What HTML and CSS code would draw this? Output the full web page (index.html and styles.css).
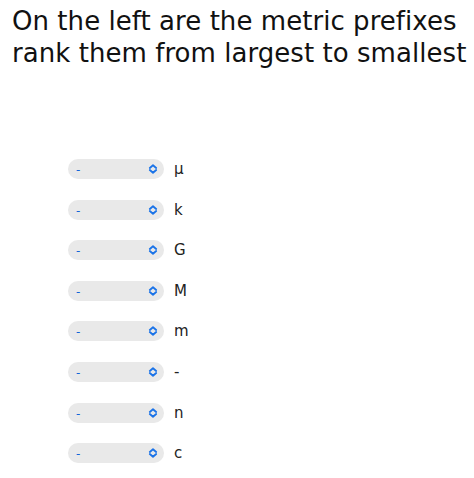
FILE: index.html
```html
<!DOCTYPE html>
<html lang="en">
  <head>
    <meta charset="UTF-8" />
    <meta name="viewport" content="width=device-width, initial-scale=1.0" />
    <title>Metric prefixes</title>
    <link rel="stylesheet" href="styles.css">
  </head>

  <body>
    <h1 class="question">On the left are the metric prefixes<br>rank them from largest to smallest</h1>
    <div class="rank-list">
      <div class="rank-row">
        <select class="rank-select"><option>-</option></select>
        <span class="prefix">µ</span>
      </div>
      <div class="rank-row">
        <select class="rank-select"><option>-</option></select>
        <span class="prefix">k</span>
      </div>
      <div class="rank-row">
        <select class="rank-select"><option>-</option></select>
        <span class="prefix">G</span>
      </div>
      <div class="rank-row">
        <select class="rank-select"><option>-</option></select>
        <span class="prefix">M</span>
      </div>
      <div class="rank-row">
        <select class="rank-select"><option>-</option></select>
        <span class="prefix">m</span>
      </div>
      <div class="rank-row">
        <select class="rank-select"><option>-</option></select>
        <span class="prefix">-</span>
      </div>
      <div class="rank-row">
        <select class="rank-select"><option>-</option></select>
        <span class="prefix">n</span>
      </div>
      <div class="rank-row">
        <select class="rank-select"><option>-</option></select>
        <span class="prefix">c</span>
      </div>
    </div>
  </body>
</html>
```

FILE: styles.css
```css
body {
  font-family: "DejaVu Sans", Verdana, sans-serif;
  margin: 0;
  padding: 0;
  background: #fff;
  color: #111;
}

.question {
  margin: 0;
  padding: 5px 0 0 12px;
  font-size: 26px;
  font-weight: normal;
  line-height: 32px;
  letter-spacing: 0.05px;
  white-space: nowrap;
}

.rank-list {
  display: flex;
  flex-direction: column;
  gap: 20.6px;
  padding-top: 90px;
  padding-left: 68px;
}

.rank-row {
  display: flex;
  align-items: center;
  gap: 10px;
  height: 20px;
}

.rank-select {
  appearance: none;
  width: 96px;
  height: 20px;
  border: none;
  border-radius: 10px;
  padding: 2px 0 0 8px;
  font-family: "DejaVu Sans", sans-serif;
  font-size: 12px;
  color: #1565d8;
  background-color: #e9e9e9;
  background-image: url("data:image/svg+xml,%3Csvg xmlns='http://www.w3.org/2000/svg' width='10' height='10' viewBox='0 0 10 10'%3E%3Cpath d='M1.8 4 L5 1.3 L8.2 4 M1.8 6 L5 8.7 L8.2 6' fill='none' stroke='%231a73e8' stroke-width='1.8' stroke-linecap='round' stroke-linejoin='round'/%3E%3C/svg%3E");
  background-repeat: no-repeat;
  background-position: right 6px center;
}

.prefix {
  font-size: 15px;
  color: #222;
}
```
